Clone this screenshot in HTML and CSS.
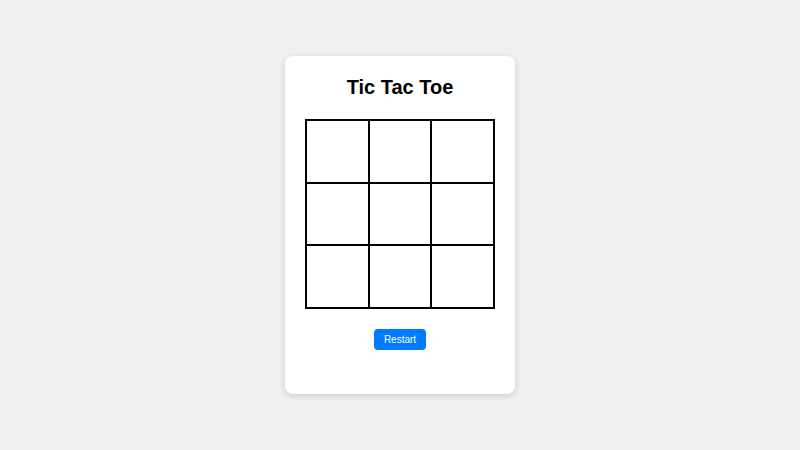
FILE: index.html
```html
<!DOCTYPE html>
<html>
<head>
<meta charset="utf-8">
<link rel="stylesheet" href="styles.css">
</head>
<body>
<div class="card">
  <h1 class="title">Tic Tac Toe</h1>
  <div class="board">
    <div class="cell"></div><div class="cell"></div><div class="cell"></div>
    <div class="cell"></div><div class="cell"></div><div class="cell"></div>
    <div class="cell"></div><div class="cell"></div><div class="cell"></div>
  </div>
  <button class="restart">Restart</button>
  <div class="status"></div>
</div>
</body>
</html>
```
FILE: styles.css
```css
html, body {
  margin: 0;
  padding: 0;
  height: 100%;
}
body {
  background: #f0f0f0;
  font-family: "Liberation Sans", Arial, sans-serif;
  display: flex;
  align-items: center;
  justify-content: center;
}
.card {
  background: #fff;
  width: 190px;
  padding: 20px 20px 20px;
  border-radius: 8px;
  box-shadow: 0 2px 6px rgba(0,0,0,0.15);
  display: flex;
  flex-direction: column;
  align-items: center;
}
.title {
  margin: 0 0 20px;
  font-size: 20px;
  line-height: 23px;
  font-weight: bold;
  color: #000;
}
.board {
  display: grid;
  grid-template-columns: repeat(3, 1fr);
  grid-template-rows: repeat(3, 1fr);
  border: 1px solid #000;
  width: 190px;
  height: 190px;
  box-sizing: border-box;
}
.cell {
  border: 1px solid #000;
  box-sizing: border-box;
}
.restart {
  margin-top: 20px;
  background: #007bff;
  color: #fff;
  border: none;
  border-radius: 4px;
  font-family: "Liberation Sans", Arial, sans-serif;
  font-size: 10px;
  line-height: 11px;
  padding: 5px 10px;
}
.status {
  height: 24px;
}
```
